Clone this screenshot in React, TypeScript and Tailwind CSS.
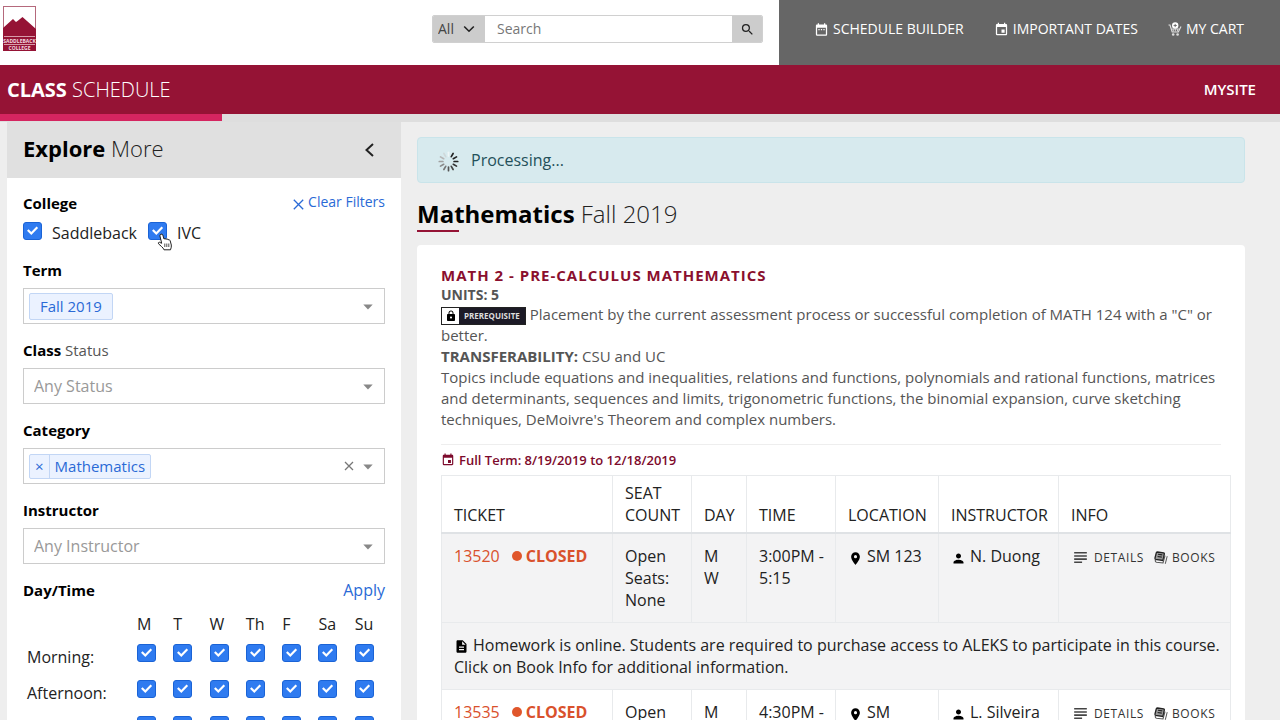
import { useState } from "react";
import type { ReactNode } from "react";
import {
  MdDateRange,
  MdDescription,
  MdEvent,
  MdLocationOn,
  MdLock,
  MdPerson,
  MdSearch,
  MdSubject,
} from "react-icons/md";

const days = ["M", "T", "W", "Th", "F", "Sa", "Su"];
const periods = ["Morning", "Afternoon", "Evening"];

const sections = [
  {
    ticket: "13520",
    status: "CLOSED",
    seats: "Open Seats: None",
    day: "M W",
    time: "3:00PM - 5:15",
    location: "SM 123",
    instructor: "N. Duong",
    note: "Homework is online. Students are required to purchase access to ALEKS to participate in this course. Click on Book Info for additional information.",
  },
  {
    ticket: "13535",
    status: "CLOSED",
    seats: "Open Seats: None",
    day: "M W",
    time: "4:30PM - 6:45",
    location: "SM 313A",
    instructor: "L. Silveira",
    note: "",
  },
];

function Logo() {
  return (
    <svg viewBox="0 0 33 45" className="h-[45px] w-[33px]" role="img" aria-label="Saddleback College">
      <rect x="0.5" y="0.5" width="32" height="44" fill="#fff" stroke="#b5697c" />
      <path d="M0 22 L10 13 L13 16 L14.500 15 L19.500 11 L33 23 V45 H0 Z" fill="#951335" />
      <path d="M1 30.500 H32 M1 38.500 H32" stroke="#d79aa8" strokeWidth="1" />
      <text x="16.500" y="36.500" fontSize="5" fontWeight="700" fill="#f3dbe0" textAnchor="middle" fontFamily="Open Sans, sans-serif">
        SADDLEBACK
      </text>
      <text x="16.500" y="43.500" fontSize="5" fontWeight="700" fill="#f3dbe0" textAnchor="middle" fontFamily="Open Sans, sans-serif">
        COLLEGE
      </text>
    </svg>
  );
}

function CartIcon() {
  return (
    <svg viewBox="0 0 14 14" className="size-[14px]" fill="none" stroke="#ddd" aria-hidden="true">
      <path d="M0.500 3 H2 L4.200 10 H10.300 L13 4.500" strokeWidth="1.200" />
      <path d="M3.500 7 H11.500 M5.500 9.500 L5 7 M7.300 9.500 V7 M9.300 9.500 L9.800 7" strokeWidth="0.900" />
      <circle cx="7.200" cy="3.500" r="3.200" fill="#fff" stroke="none" />
      <path d="M7.200 1.900 V5.100 M5.600 3.500 H8.800" stroke="#666" strokeWidth="0.900" />
      <circle cx="5.200" cy="12.500" r="1.300" fill="#ddd" stroke="none" />
      <circle cx="9.600" cy="12.500" r="1.300" fill="#ddd" stroke="none" />
    </svg>
  );
}

function BooksIcon() {
  return (
    <svg viewBox="0 0 14 14" className="size-[14px] shrink-0" fill="none" stroke="#222" aria-hidden="true">
      <path d="M3.500 1 L9.500 1.800 Q10.500 2 10.300 3 L9 9.500 L1.500 8.500 Q0.800 8 1 7 L2.300 1.800 Q2.700 1 3.500 1 Z" fill="#999" strokeWidth="1.300" />
      <path d="M4 3.300 L8.300 3.900 M3.600 5.500 L7.800 6.100" stroke="#222" strokeWidth="1.100" />
      <path d="M1.500 8.500 Q0.800 10.800 2.500 11.200 L9 12 L11 4.500" stroke="#555" strokeWidth="1.100" />
      <path d="M11.300 12.800 L13.200 5.200" stroke="#555" strokeWidth="1" />
    </svg>
  );
}

function Spinner() {
  const shades = ["#eef6f7", "#222", "#222", "#222", "#333", "#444", "#555", "#777", "#8a8a8a", "#a0a0a0", "#b5b5b5", "#cfd8da"];
  return (
    <svg viewBox="-10 -10 20 20" className="mt-[3px] size-[21px]" strokeWidth="1.600" strokeLinecap="round" aria-hidden="true">
      {shades.map((shade, i) => (
        <path key={i} d="M0 -5.300 V-8.800" stroke={shade} transform={`rotate(${i * 30})`} />
      ))}
    </svg>
  );
}

function HandCursor() {
  return (
    <svg viewBox="0 0 16 18" className="pointer-events-none absolute left-[9px] top-[11px] h-[18px] w-[16px]" aria-hidden="true">
      <path
        d="M4 1.200 Q5.300 0.700 5.800 2 L7 6 Q8 5 9 6.200 Q10.200 5.300 11 6.700 Q12.500 6.100 13.200 7.800 L14.300 12 Q14.600 14 13.500 16.800 H7 Q6.300 15 4.500 13.500 L1.500 10.800 Q0.800 9.500 2.300 9.200 L4.700 10.300 L2.900 2.800 Q2.800 1.700 4 1.200 Z"
        fill="#fff"
        stroke="#222"
        strokeWidth="1"
      />
      <path d="M7.800 10.500 V14 M9.800 10.500 V14 M11.800 10.500 V14" stroke="#222" strokeWidth="0.800" />
    </svg>
  );
}

function Checkbox({ id, label }: { id: string; label?: string }) {
  return (
    <span className="relative inline-block h-[18px] w-[19px]">
      <input
        id={id}
        type="checkbox"
        defaultChecked
        aria-label={label}
        className="peer block h-[18px] w-[19px] appearance-none rounded-[3px] border border-[#1a63d6] bg-white checked:bg-[#2f7bf0]"
      />
      <svg
        viewBox="0 0 19 18"
        className="pointer-events-none absolute inset-0 hidden size-full peer-checked:block"
        fill="none"
        stroke="#fff"
        strokeWidth="2.200"
        aria-hidden="true"
      >
        <path d="M4.800 8 L8.300 11.500 L14.300 5.300" />
      </svg>
    </span>
  );
}

function Caret() {
  return (
    <svg viewBox="0 0 10 6" className="pointer-events-none mt-[2px] h-[6px] w-[10px] shrink-0" fill="#888" aria-hidden="true">
      <path d="M0.300 0.500 H9.700 L5 5.500 Z" />
    </svg>
  );
}

function Field({ id, label, children }: { id: string; label: ReactNode; children: ReactNode }) {
  return (
    <div className="mb-[15px]">
      <label htmlFor={id} className="mb-[7px] block text-[15px] font-bold text-black">
        {label}
      </label>
      <div className="flex h-9 items-center border border-[#ccc] bg-white pl-[5px] pr-[11px]">{children}</div>
    </div>
  );
}

function Sidebar() {
  return (
    <aside className="w-[394px] shrink-0 bg-white text-base leading-[22px] text-[#222]">
      <div className="flex h-14 items-center justify-between bg-[#e0e0e0] px-4">
        <h2 className="pb-1 text-[22px] leading-7 text-[#222]">
          <b className="font-bold text-black">Explore</b> <span className="font-light">More</span>
        </h2>
        <button type="button" aria-label="Collapse filters" className="mr-[7px] p-1">
          <svg viewBox="0 0 9 14" className="h-[14px] w-[9px]" fill="none" stroke="#222" strokeWidth="2" aria-hidden="true">
            <path d="M8 1 L1.500 7 L8 13" />
          </svg>
        </button>
      </div>

      <form className="px-4 pt-[14px]" onSubmit={(e) => e.preventDefault()}>
        <fieldset className="mb-[14px]">
          <div className="flex items-start justify-between">
            <legend className="text-[15px] font-bold text-black">College</legend>
            <button type="button" className="flex items-center gap-1 text-sm leading-5 text-[#2a6ad6]">
              <svg viewBox="0 0 11 11" className="mt-1 size-[11px]" stroke="currentColor" strokeWidth="1.300" aria-hidden="true">
                <path d="M0.800 0.800 L10.200 10.200 M10.200 0.800 L0.800 10.200" />
              </svg>
              Clear Filters
            </button>
          </div>
          <div className="mt-2 flex">
            <Checkbox id="saddleback" />
            <label htmlFor="saddleback" className="ml-[10px] mr-[11px]">
              Saddleback
            </label>
            <span className="relative">
              <Checkbox id="ivc" />
              <HandCursor />
            </span>
            <label htmlFor="ivc" className="ml-[10px]">
              IVC
            </label>
          </div>
        </fieldset>

        <Field id="term" label="Term">
          <span className="rounded-[2px] border border-[#c2d6f5] bg-[#ebf2ff] px-[10px] text-[15px] leading-[25px] text-[#2a6ad6]">Fall 2019</span>
          <input id="term" className="min-w-0 flex-1 outline-none" />
          <Caret />
        </Field>

        <Field
          id="status"
          label={
            <>
              Class <span className="font-normal text-[#555]">Status</span>
            </>
          }
        >
          <select id="status" className="min-w-0 flex-1 appearance-none bg-transparent pl-[5px] text-[#999] outline-none">
            <option>Any Status</option>
            <option>Open</option>
            <option>Closed</option>
          </select>
          <Caret />
        </Field>

        <Field id="category" label="Category">
          <span className="flex rounded-[2px] border border-[#c2d6f5] bg-[#ebf2ff] text-[15px] leading-[23px] text-[#2a6ad6]">
            <button type="button" aria-label="Remove Mathematics" className="border-r border-[#c2d6f5] px-[5px]">
              ×
            </button>
            <span className="px-[5px]">Mathematics</span>
          </span>
          <input id="category" className="min-w-0 flex-1 outline-none" />
          <button type="button" aria-label="Clear category" className="mr-[9px] text-[#777]">
            <svg viewBox="0 0 10 10" className="size-[10px]" stroke="currentColor" strokeWidth="1.300" aria-hidden="true">
              <path d="M1 1 L9 9 M9 1 L1 9" />
            </svg>
          </button>
          <Caret />
        </Field>

        <Field id="instructor" label="Instructor">
          <select id="instructor" className="min-w-0 flex-1 appearance-none bg-transparent pl-[5px] text-[#999] outline-none">
            <option>Any Instructor</option>
            <option>N. Duong</option>
            <option>L. Silveira</option>
          </select>
          <Caret />
        </Field>

        <div className="flex justify-between">
          <h3 className="text-[15px] font-bold text-black">Day/Time</h3>
          <button type="button" className="text-[#2a6ad6]">
            Apply
          </button>
        </div>
        <div className="-mr-[6px] mt-3">
          <table className="w-full table-fixed">
            <colgroup>
              <col className="w-[114px]" />
              {days.map((day) => (
                <col key={day} />
              ))}
            </colgroup>
            <thead>
              <tr className="h-[22px]">
                <td />
                {days.map((day) => (
                  <th key={day} scope="col" className="text-left font-normal">
                    {day}
                  </th>
                ))}
              </tr>
            </thead>
            <tbody>
              {periods.map((period) => (
                <tr key={period} className="h-9">
                  <th scope="row" className="pl-1 pt-2 text-left font-normal">
                    {period}:
                  </th>
                  {days.map((day) => (
                    <td key={day} className="pt-[9px] align-top leading-none">
                      <Checkbox id={`${period}-${day}`} label={`${period} ${day}`} />
                    </td>
                  ))}
                </tr>
              ))}
            </tbody>
          </table>
        </div>
      </form>
    </aside>
  );
}

function SectionTable() {
  const cell = "border border-[#e8eaec] py-[11px] pl-3 pr-2 align-top";
  return (
    <div className="-mr-[9px]">
      <table className="w-full table-fixed border-collapse text-base leading-[22px] text-[#222]">
        <colgroup>
          <col className="w-[171px]" />
          <col className="w-[79px]" />
          <col className="w-[55px]" />
          <col className="w-[89px]" />
          <col className="w-[103px]" />
          <col className="w-[120px]" />
          <col className="w-[172px]" />
        </colgroup>
        <thead>
          <tr className="border-b-2 border-[#dfe2e5]">
            {["TICKET", "SEAT COUNT", "DAY", "TIME", "LOCATION", "INSTRUCTOR", "INFO"].map((name) => (
              <th key={name} scope="col" className="border-x border-t border-[#e8eaec] py-[6px] pl-3 pr-2 text-left align-bottom font-normal">
                {name}
              </th>
            ))}
          </tr>
        </thead>
        {sections.map((s, i) => (
          <tbody key={s.ticket} className={i % 2 === 0 ? "bg-[#f3f3f4]" : "bg-white"}>
            <tr>
              <td className={cell}>
                <div className="flex items-center text-[#d9512c]">
                  <a href="#ticket">{s.ticket}</a>
                  <span className="ml-3 mr-1 size-[10px] rounded-full bg-[#e0562b]" />
                  <b className="font-bold">{s.status}</b>
                </div>
              </td>
              <td className={cell}>{s.seats}</td>
              <td className={cell}>
                <div className="w-4">{s.day}</div>
              </td>
              <td className={cell}>{s.time}</td>
              <td className={cell}>
                <div className="flex pr-2">
                  <MdLocationOn className="mr-1 mt-[6px] size-[15px] shrink-0 text-black" />
                  {s.location}
                </div>
              </td>
              <td className={cell}>
                <div className="flex whitespace-nowrap">
                  <MdPerson className="mr-1 mt-[6px] size-[15px] shrink-0 text-black" />
                  {s.instructor}
                </div>
              </td>
              <td className={cell}>
                <div className="flex items-center whitespace-nowrap pt-[3px] text-xs leading-[19px] tracking-wider text-[#333]">
                  <button type="button" className="flex items-center gap-1">
                    <MdSubject className="size-[19px] text-[#444]" />
                    DETAILS
                  </button>
                  <button type="button" className="ml-[10px] flex items-center gap-1">
                    <BooksIcon />
                    BOOKS
                  </button>
                </div>
              </td>
            </tr>
            {s.note && (
              <tr>
                <td colSpan={7} className="border border-[#e8eaec] py-[11px] pl-3 pr-1">
                  <MdDescription className="mr-1 inline size-[15px] text-black" />
                  {s.note}
                </td>
              </tr>
            )}
          </tbody>
        ))}
      </table>
    </div>
  );
}

export default function App() {
  const [query, setQuery] = useState("");
  return (
    <div className="flex h-screen flex-col overflow-hidden bg-[#eee] font-['Open_Sans',sans-serif]">
      <header className="flex h-[65px] shrink-0 bg-white">
        <div className="flex flex-1 justify-between">
          <a href="#home" className="ml-[3px] mt-[6px]">
            <Logo />
          </a>
          <form className="mr-4 mt-[15px] flex h-[28px] w-[331px] overflow-hidden rounded-[2px] border border-[#d0d0d0] text-sm" onSubmit={(e) => e.preventDefault()}>
            <div className="flex w-[52px] shrink-0 items-center bg-[#ccc] pr-[10px] text-[#444]">
              <select aria-label="Search in" className="min-w-0 flex-1 appearance-none pl-[5px] outline-none">
                <option>All</option>
                <option>Classes</option>
              </select>
              <svg viewBox="0 0 12 8" className="pointer-events-none h-2 w-3 shrink-0" fill="none" stroke="#222" strokeWidth="1.600" aria-hidden="true">
                <path d="M1.200 1.500 L6 6.200 L10.800 1.500" />
              </svg>
            </div>
            <input
              type="text"
              aria-label="Search"
              placeholder="Search"
              value={query}
              onChange={(e) => setQuery(e.target.value)}
              className="min-w-0 flex-1 px-3 outline-none placeholder:text-[#777]"
            />
            <button type="submit" aria-label="Submit search" className="flex w-[30px] items-center justify-center bg-[#ccc] text-[#222]">
              <MdSearch className="size-[15px]" />
            </button>
          </form>
        </div>
        <nav className="flex w-[501px] items-center justify-between bg-[#666] pb-[7px] pl-[35px] pr-9 text-sm font-medium text-white">
          <a href="#builder" className="flex items-center gap-1">
            <MdDateRange className="size-[15px]" />
            SCHEDULE BUILDER
          </a>
          <a href="#dates" className="flex items-center gap-1">
            <MdEvent className="size-[15px]" />
            IMPORTANT DATES
          </a>
          <a href="#cart" className="flex items-center gap-1">
            <CartIcon />
            MY CART
          </a>
        </nav>
      </header>

      <div className="flex h-[49px] shrink-0 items-center justify-between bg-[#951335] pl-[7px] pr-6 text-white">
        <h1 className="text-xl">
          <b className="font-bold">CLASS</b> <span className="font-light">SCHEDULE</span>
        </h1>
        <a href="#mysite" className="text-[15px] font-semibold">
          MYSITE
        </a>
      </div>
      <div className="h-2 shrink-0 bg-[#dedede]">
        <div className="h-[7px] w-[222px] bg-[#d52560]" />
      </div>

      <div className="flex min-h-0 flex-1 items-start gap-4 pl-[7px] pr-[35px]">
        <Sidebar />
        <main className="min-w-0 flex-1 pt-[15px]">
          <div role="status" className="flex h-[46px] items-center gap-3 rounded border border-[#c9e4ea] bg-[#d7eaee] px-5 text-base text-[#24505a]">
            <Spinner />
            Processing...
          </div>

          <h2 className="mt-4 text-2xl leading-[30px] text-[#222]">
            <b className="font-bold text-black">Mathematics</b> <span className="font-light">Fall 2019</span>
          </h2>
          <div className="mt-px h-[2px] w-[42px] bg-[#951335]" />

          <article className="mt-[13px] rounded bg-white px-6 pb-6 pt-5 text-[15px] leading-[21px] text-[#555]">
            <h3 className="font-bold tracking-[1px] text-[#8a0f2e]">MATH 2 - PRE-CALCULUS MATHEMATICS</h3>
            <p className="text-sm font-bold leading-[18px]">UNITS: 5</p>
            <p>
              <span className="mr-1 inline-flex h-[18px] items-center border border-[#222] bg-[#1c1a26] align-middle text-[8px] font-bold leading-4 text-[#ddd]">
                <span className="flex h-4 w-[17px] items-center justify-center bg-white text-black">
                  <MdLock className="size-3" />
                </span>
                <span className="px-[5px]">PREREQUISITE</span>
              </span>
              Placement by the current assessment process or successful completion of MATH 124 with a "C" or better.
            </p>
            <p>
              <b className="font-bold">TRANSFERABILITY:</b> CSU and UC
            </p>
            <p>
              Topics include equations and inequalities, relations and functions, polynomials and rational functions, matrices and
              determinants, sequences and limits, trigonometric functions, the binomial expansion, curve sketching techniques,
              DeMoivre's Theorem and complex numbers.
            </p>
            <hr className="mt-[14px] border-[#eee]" />
            <p className="flex h-[30px] items-center gap-1 text-[13px] font-semibold text-[#7d0a2c]">
              <MdEvent className="size-[14px]" />
              Full Term: 8/19/2019 to 12/18/2019
            </p>
            <SectionTable />
          </article>
        </main>
      </div>
    </div>
  );
}
